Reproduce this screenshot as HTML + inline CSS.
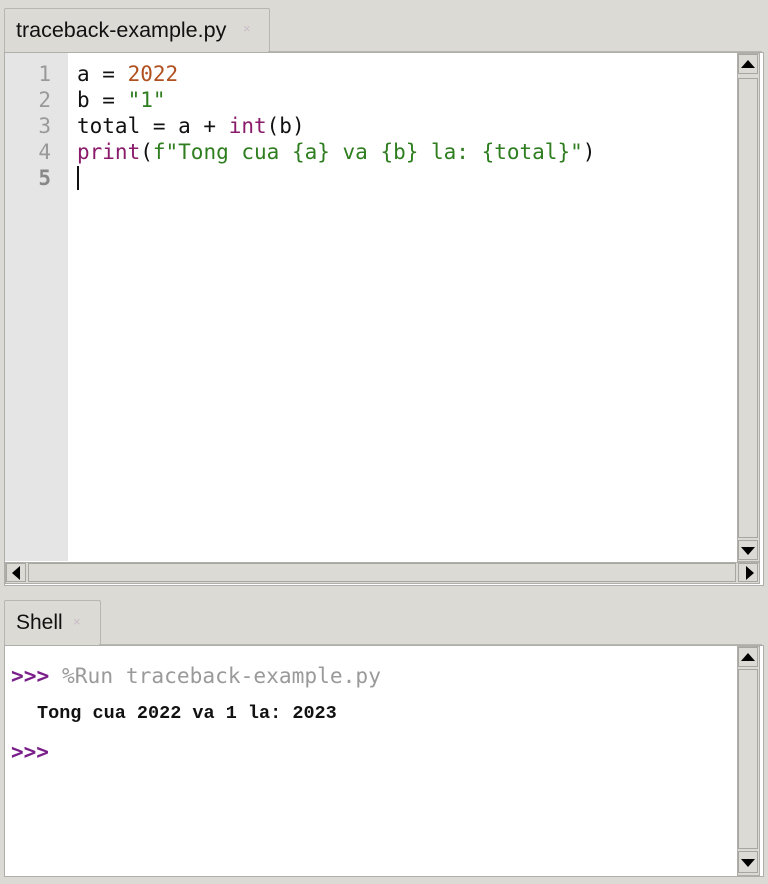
<!DOCTYPE html>
<html><head><style>
body{margin:0;width:768px;height:884px;background:#dcdad5;position:relative;overflow:hidden;font-family:"Liberation Sans",sans-serif}
.a{position:absolute}
.tab{background:#dcdad5;border:1px solid #b8b6b0;border-bottom:none;border-radius:2px 2px 0 0}
.frame{border:1px solid #b0aea8;background:#fff}
.code{font-family:"DejaVu Sans Mono",monospace;font-size:21px;line-height:26px;white-space:pre;color:#111}
.ln{font-family:"DejaVu Sans Mono",monospace;font-size:21px;line-height:26px;color:#999;text-align:right;white-space:pre}
.sb{background:#dcdad5;border:1px solid #b0aea8}
.btn{background:#dcdad5;border:1px solid #a8a6a0;box-sizing:border-box}
.up{width:0;height:0;border-left:7px solid transparent;border-right:7px solid transparent;border-bottom:8px solid #000}
.dn{width:0;height:0;border-left:7px solid transparent;border-right:7px solid transparent;border-top:8px solid #000}
</style></head><body>
<div class="a tab" style="left:4px;top:8px;width:264px;height:45px"></div>
<div class="a" style="left:16px;top:18px;font-size:21.5px;color:#111">traceback-example.py</div>
<div class="a" style="left:243px;top:21px;font-size:13px;color:#c8bcc8">×</div>
<div class="a" style="left:268px;top:51px;width:494px;height:1px;background:#b8b6b0"></div>
<div class="a frame" style="left:4px;top:52px;width:758px;height:532px"></div>
<div class="a" style="left:5px;top:53px;width:63px;height:508px;background:#e5e5e5"></div>
<div class="a ln" style="left:5px;top:61px;width:46px">1
2
3
4
<b style="color:#888">5</b></div>
<div class="a code" style="left:77px;top:61px">a = <span style="color:#b0501f">2022</span>
b = <span style="color:#2e7d1f">"1"</span>
total = a + <span style="color:#8a1a6a">int</span>(b)
<span style="color:#8a1a6a">print</span>(<span style="color:#2e7d1f">f"Tong cua {a} va {b} la: {total}"</span>)</div>
<div class="a" style="left:77px;top:166px;width:2px;height:24px;background:#111"></div>
<div class="a sb" style="left:737px;top:53px;width:21px;height:507px"></div>
<div class="a btn" style="left:738px;top:54px;width:20px;height:20px"><div class="up" style="margin:5px 0 0 2px"></div></div>
<div class="a btn" style="left:738px;top:78px;width:20px;height:460px"></div>
<div class="a btn" style="left:738px;top:540px;width:20px;height:20px"><div class="dn" style="margin:6px 0 0 2px"></div></div>
<div class="a sb" style="left:5px;top:562px;width:753px;height:20px"></div>
<div class="a btn" style="left:6px;top:563px;width:20px;height:19px"><div style="width:0;height:0;border-top:7px solid transparent;border-bottom:7px solid transparent;border-right:8px solid #000;margin:2px 0 0 5px"></div></div>
<div class="a btn" style="left:28px;top:563px;width:708px;height:19px"></div>
<div class="a btn" style="left:738px;top:563px;width:20px;height:19px"><div style="width:0;height:0;border-top:7px solid transparent;border-bottom:7px solid transparent;border-left:8px solid #000;margin:2px 0 0 7px"></div></div>
<div class="a tab" style="left:4px;top:600px;width:95px;height:45px"></div>
<div class="a" style="left:16px;top:611px;font-size:21px;color:#111">Shell</div>
<div class="a" style="left:73px;top:614px;font-size:13px;color:#c8bcc8">×</div>
<div class="a" style="left:99px;top:644px;width:663px;height:1px;background:#b8b6b0"></div>
<div class="a frame" style="left:4px;top:645px;width:758px;height:230px"></div>
<div class="a" style="left:11px;top:663px;font-family:'DejaVu Sans Mono',monospace;font-size:21.2px;white-space:pre"><b style="color:#7a1f8a">&gt;&gt;&gt;</b> <span style="color:#9a9a9a">%Run traceback-example.py</span></div>
<div class="a" style="left:37px;top:703px;font-family:'Liberation Mono',monospace;font-weight:bold;font-size:18.5px;color:#111;white-space:pre">Tong cua 2022 va 1 la: 2023</div>
<div class="a" style="left:11px;top:740px;font-family:'DejaVu Sans Mono',monospace;font-size:21px"><b style="color:#7a1f8a">&gt;&gt;&gt;</b></div>
<div class="a sb" style="left:737px;top:646px;width:21px;height:228px"></div>
<div class="a btn" style="left:738px;top:647px;width:20px;height:20px"><div class="up" style="margin:5px 0 0 2px"></div></div>
<div class="a btn" style="left:738px;top:669px;width:20px;height:180px"></div>
<div class="a btn" style="left:738px;top:851px;width:20px;height:22px"><div class="dn" style="margin:7px 0 0 2px"></div></div>
</body></html>
